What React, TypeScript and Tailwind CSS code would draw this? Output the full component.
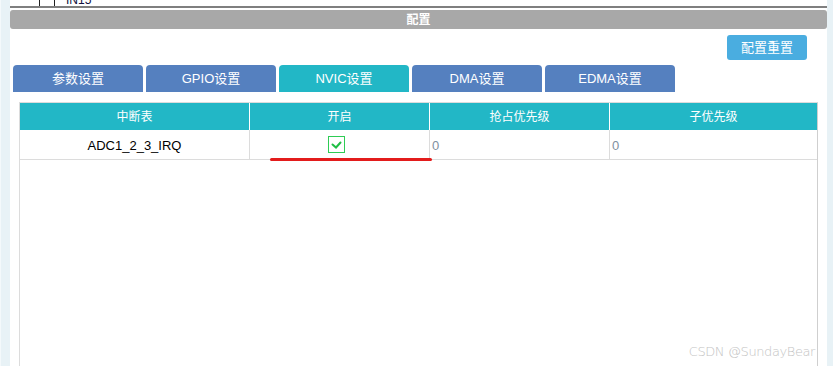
import { useState } from 'react'

type TabId = 'param' | 'gpio' | 'nvic' | 'dma' | 'edma'

const tabs: { id: TabId; label: string }[] = [
  { id: 'param', label: '参数设置' },
  { id: 'gpio', label: 'GPIO设置' },
  { id: 'nvic', label: 'NVIC设置' },
  { id: 'dma', label: 'DMA设置' },
  { id: 'edma', label: 'EDMA设置' },
]

const cjk = 'font-["Liberation_Sans","Noto_Sans_CJK_SC",sans-serif]'

function CheckBox() {
  return (
    <span className="flex h-[17px] w-[17px] items-center justify-center border border-[#2ecc55] bg-white">
      <svg width="11" height="8" viewBox="0 0 11 8" fill="none">
        <path d="M1.5 3.5 L5 6.5 L9.5 1.5" stroke="#1fbf45" strokeWidth="2" strokeLinecap="round" />
      </svg>
    </span>
  )
}

export default function App() {
  const [tab, setTab] = useState<TabId>('nvic')

  return (
    <div className={`flex h-[366px] w-[833px] overflow-hidden bg-white ${cjk}`}>
      <div className="w-[10px] shrink-0 border-l border-[#f4f9fb] bg-[#e8f2f6]" />
      <div className="flex w-[817px] flex-col">
        {/* tree remnant from the panel above, only its bottom edge shows */}
        <div className="flex h-[6px] items-end overflow-hidden pl-[29px]">
          <div className="flex h-[14px] shrink-0 items-end gap-[14px] font-['Liberation_Sans',sans-serif] text-[12px] leading-[12px] text-[#101040]">
            <span className="h-[14px] w-px bg-[#202020]" />
            <span className="h-[14px] w-px bg-[#202020]" />
            <span className="-ml-[3px]">IN15</span>
          </div>
        </div>
        <div className="h-[2px] bg-[#7f7f7f]" />
        <div className="mt-[2px] flex h-[19px] items-center justify-center rounded-[3px] bg-[#a8a8a8] text-[12px] font-bold text-white">
          配置
        </div>

        <div className="mt-[6px] flex justify-end pr-[20px]">
          <button
            type="button"
            className="h-[25px] w-[80px] rounded-[3px] bg-[#4aade0] text-[13px] text-white"
          >
            配置重置
          </button>
        </div>

        <div className="mt-[5px] flex gap-[3px] pl-[3px]">
          {tabs.map((t) => (
            <button
              key={t.id}
              type="button"
              onClick={() => setTab(t.id)}
              className={`h-[27px] w-[130px] rounded-t-[4px] text-[13px] text-white ${
                tab === t.id ? 'bg-[#22b7c6]' : 'bg-[#5580bf]'
              }`}
            >
              {t.label}
            </button>
          ))}
        </div>

        <div className="relative mt-[10px] ml-[9px] w-[799px] flex-1 border border-b-0 border-[#dcdcdc] border-r-[#cfcfcf]">
          <div className="grid grid-cols-[230px_180px_180px_1fr] text-[12px]">
            <div className="flex h-[27px] items-center justify-center border-r border-white bg-[#22b7c6] text-white">中断表</div>
            <div className="flex h-[27px] items-center justify-center border-r border-white bg-[#22b7c6] text-white">开启</div>
            <div className="flex h-[27px] items-center justify-center border-r border-white bg-[#22b7c6] text-white">抢占优先级</div>
            <div className="flex h-[27px] items-center justify-center bg-[#22b7c6] text-white">子优先级</div>

            <div className="flex h-[30px] items-center justify-center border-r border-b border-[#dcdcdc] pt-[2px] text-[13px] text-black">
              ADC1_2_3_IRQ
            </div>
            <div className="flex h-[30px] items-center justify-center border-r border-b border-[#dcdcdc] pr-[6px]">
              <CheckBox />
            </div>
            <div className="flex h-[30px] items-center border-r border-b border-[#dcdcdc] pt-[2px] pl-[2px] text-[13px] text-[#8090a0]">
              0
            </div>
            <div className="flex h-[30px] items-center border-b border-[#dcdcdc] pt-[2px] pl-[2px] text-[13px] text-[#8090a0]">
              0
            </div>
          </div>

          {/* red annotation under the enable column */}
          <div className="absolute top-[55px] left-[250px] h-[3px] w-[162px] rounded-full bg-[#e31c1c]" />

          <div className="absolute right-[2px] bottom-[5px] font-['DejaVu_Sans',sans-serif] text-[13px] font-extralight tracking-[-0.4px] text-[#c4c4c4]">
            CSDN @SundayBear
          </div>
        </div>
      </div>
      <div className="w-[6px] shrink-0 bg-[#e8f2f6]" />
    </div>
  )
}
